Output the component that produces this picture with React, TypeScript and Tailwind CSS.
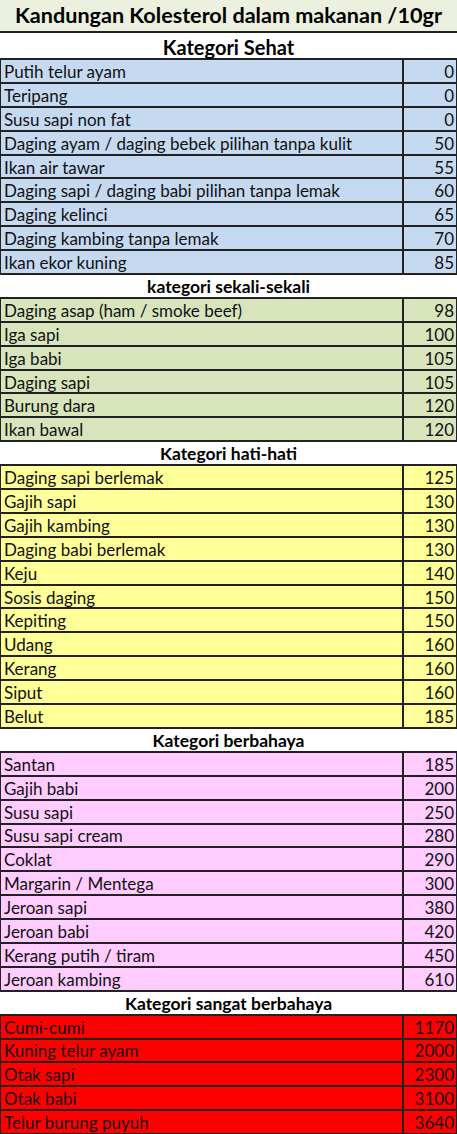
import React from "react";

type Section = { title: string; bg: string; rows: [string, number][] };

const sections: Section[] = [
  {
    title: "Kategori Sehat",
    bg: "bg-[#c5d9f1]",
    rows: [
      ["Putih telur ayam", 0],
      ["Teripang", 0],
      ["Susu sapi non fat", 0],
      ["Daging ayam / daging bebek pilihan tanpa kulit", 50],
      ["Ikan air tawar", 55],
      ["Daging sapi / daging babi pilihan tanpa lemak", 60],
      ["Daging kelinci", 65],
      ["Daging kambing tanpa lemak", 70],
      ["Ikan ekor kuning", 85],
    ],
  },
  {
    title: "kategori sekali-sekali",
    bg: "bg-[#d8e4bc]",
    rows: [
      ["Daging asap (ham / smoke beef)", 98],
      ["Iga sapi", 100],
      ["Iga babi", 105],
      ["Daging sapi", 105],
      ["Burung dara", 120],
      ["Ikan bawal", 120],
    ],
  },
  {
    title: "Kategori hati-hati",
    bg: "bg-[#ffff99]",
    rows: [
      ["Daging sapi berlemak", 125],
      ["Gajih sapi", 130],
      ["Gajih kambing", 130],
      ["Daging babi berlemak", 130],
      ["Keju", 140],
      ["Sosis daging", 150],
      ["Kepiting", 150],
      ["Udang", 160],
      ["Kerang", 160],
      ["Siput", 160],
      ["Belut", 185],
    ],
  },
  {
    title: "Kategori berbahaya",
    bg: "bg-[#ffccff]",
    rows: [
      ["Santan", 185],
      ["Gajih babi", 200],
      ["Susu sapi", 250],
      ["Susu sapi cream", 280],
      ["Coklat", 290],
      ["Margarin / Mentega", 300],
      ["Jeroan sapi", 380],
      ["Jeroan babi", 420],
      ["Kerang putih / tiram", 450],
      ["Jeroan kambing", 610],
    ],
  },
  {
    title: "Kategori sangat berbahaya",
    bg: "bg-[#ff0000]",
    rows: [
      ["Cumi-cumi", 1170],
      ["Kuning telur ayam", 2000],
      ["Otak sapi", 2300],
      ["Otak babi", 3100],
      ["Telur burung puyuh", 3640],
    ],
  },
];

export default function App() {
  return (
    <div
      className="w-[457px] h-[1134px] overflow-hidden bg-white text-black"
      style={{ fontFamily: "Lato, 'Open Sans', sans-serif" }}
    >
      <div className="h-[33px] bg-[#ebf1de] border-b-2 border-[#222] flex items-center justify-center text-[21.6px] font-bold leading-none whitespace-nowrap">
        Kandungan Kolesterol dalam makanan /10gr
      </div>
      {sections.map((s, si) => (
        <div key={s.title} className="flex flex-col">
          <div
            className={`${si === 0 ? "h-[27px] text-[20px]" : "h-[23.9px] text-[17.5px]"} bg-white border-b-2 border-[#222] flex items-center justify-center font-bold leading-none pt-[2px]`}
          >
            {s.title}
          </div>
          {s.rows.map(([name, val]) => (
            <div
              key={name}
              className={`h-[23.9px] ${s.bg} border-b-2 border-l border-r border-[#222] flex text-[17px] leading-none text-[#111]`}
            >
              <div className="flex-1 flex items-center pl-[3px] whitespace-nowrap pt-[1px]">
                {name}
              </div>
              <div className="w-[54px] border-l-2 border-[#222] flex items-center justify-end pr-[2px] pt-[1px]">
                {val}
              </div>
            </div>
          ))}
        </div>
      ))}
    </div>
  );
}
